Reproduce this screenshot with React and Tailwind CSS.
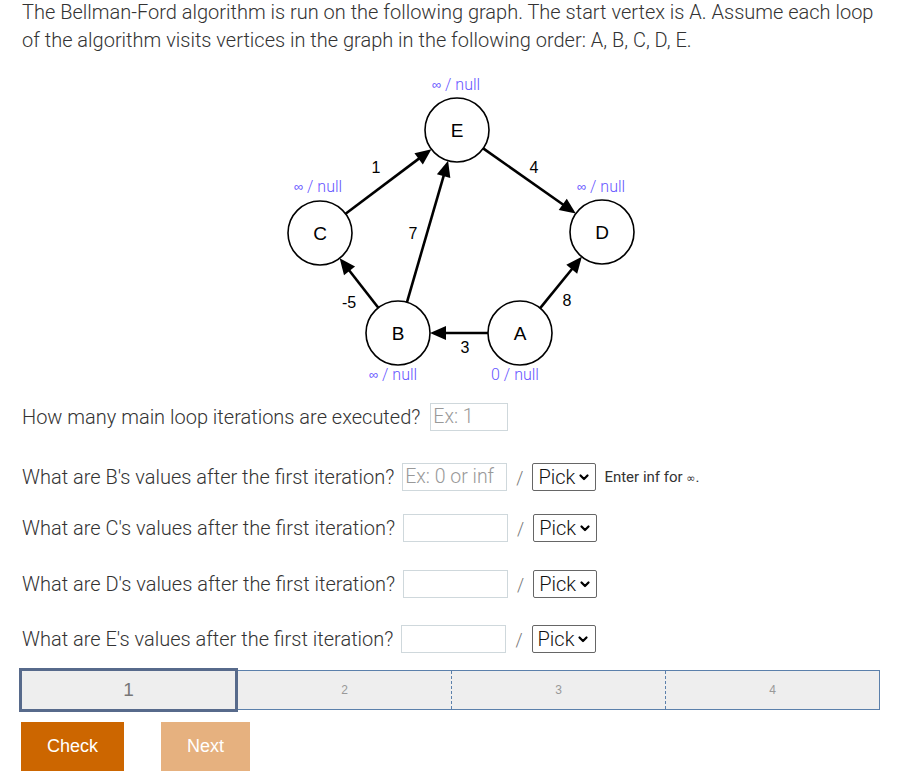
import React from "react";

const R = 32;
const nodes = {
  A: [520, 333],
  B: [398, 333],
  C: [320, 233],
  D: [602, 232],
  E: [457, 130],
};
const edges = [
  ["C", "E"],
  ["B", "E"],
  ["E", "D"],
  ["B", "C"],
  ["A", "B"],
  ["A", "D"],
];
const labels = [
  { n: "E", x: 456, y: 84, v: "" },
  { n: "C", x: 318, y: 186, v: "" },
  { n: "D", x: 601, y: 186, v: "" },
  { n: "B", x: 393, y: 374, v: "" },
  { n: "A", x: 515, y: 374, v: "0" },
];
const weights = [
  { x: 376, y: 167, t: "1" },
  { x: 534, y: 167, t: "4" },
  { x: 413, y: 233, t: "7" },
  { x: 349, y: 302, t: "-5" },
  { x: 567, y: 300, t: "8" },
  { x: 465, y: 347, t: "3" },
];

const Edge = ({ from, to }) => {
  const [x1, y1] = nodes[from];
  const [x2, y2] = nodes[to];
  const d = Math.hypot(x2 - x1, y2 - y1);
  const ux = (x2 - x1) / d;
  const uy = (y2 - y1) / d;
  const sx = x1 + ux * R;
  const sy = y1 + uy * R;
  const tx = x2 - ux * R;
  const ty = y2 - uy * R;
  const len = 16;
  const w = 7;
  const bx = tx - ux * len;
  const by = ty - uy * len;
  const pts = `${tx},${ty} ${bx - uy * w},${by + ux * w} ${bx + uy * w},${by - ux * w}`;
  return (
    <g>
      <line x1={sx} y1={sy} x2={bx + ux * 2} y2={by + uy * 2} stroke="#000" strokeWidth="2.6" />
      <polygon points={pts} fill="#000" />
    </g>
  );
};

const Graph = () => (
  <svg width="863" height="322" viewBox="22 66 863 322" className="block">
    {edges.map(([a, b]) => (
      <Edge key={a + b} from={a} to={b} />
    ))}
    {Object.entries(nodes).map(([k, [x, y]]) => (
      <g key={k}>
        <circle cx={x} cy={y} r={R} fill="#fff" stroke="#000" strokeWidth="1.6" />
        <text x={x} y={y + 7} textAnchor="middle" fontSize="19" fontFamily="'Liberation Sans', Arial, sans-serif" fill="#000">
          {k}
        </text>
      </g>
    ))}
    {weights.map((w) => (
      <text key={w.t} x={w.x} y={w.y + 6} textAnchor="middle" fontSize="16" fontFamily="'Liberation Sans', Arial, sans-serif" fill="#000">
        {w.t}
      </text>
    ))}
    {labels.map((l) => (
      <text key={l.n} x={l.x} y={l.y + 6} textAnchor="middle" fontSize="16" fontFamily="Roboto, sans-serif" fill="#6655ff">
        {l.v ? (
          l.v
        ) : (
          <tspan fontSize="13" fontFamily="'DejaVu Sans', sans-serif" dy="-1">
            ∞
          </tspan>
        )}
        <tspan dy={l.v ? 0 : 1}> / null</tspan>
      </text>
    ))}
  </svg>
);

const Chevron = () => (
  <svg width="12" height="12" viewBox="0 0 24 24" fill="none" stroke="#000" strokeWidth="4.5" strokeLinecap="round" strokeLinejoin="round">
    <path d="M5 9l7 7 7-7" />
  </svg>
);

const Pick = () => (
  <span className="inline-flex items-center gap-[3px] h-[28px] w-[64px] pl-[5px] border border-[#666] rounded-[2px] text-[20px] font-light text-[#111] leading-none">
    Pick <Chevron />
  </span>
);

const Row = ({ letter, placeholder, note, className }) => (
  <div className={"flex items-center h-[28px] " + className}>
    <span>What are {letter}'s values after the first iteration?</span>
    <span className="ml-[8px] w-[105px] h-[28px] border border-[#cfd8dc] flex items-center px-[2px] text-[19.5px] text-[#999]">
      {placeholder}
    </span>
    <span className="mx-[9px] text-[#777] text-[18px]">/</span>
    <Pick />
    {note && (
      <span className="ml-[8px] text-[15px] text-[#333] font-normal">
        Enter inf for <span className="text-[11px] font-['DejaVu_Sans',sans-serif]">∞</span>.
      </span>
    )}
  </div>
);

export default function App() {
  return (
    <div className="w-[907px] h-[771px] overflow-hidden bg-white px-[22px] font-['Roboto',sans-serif] font-light text-[#333] text-[20px]">
      <p className="leading-[28px] -mt-[2px]">
        The Bellman-Ford algorithm is run on the following graph. The start vertex is A. Assume each loop of the algorithm visits vertices in the graph in the following order: A, B, C, D, E.
      </p>
      <div className="mt-[12px]">
        <Graph />
      </div>
      <div className="flex items-center h-[28px] mt-[15px]">
        <span>How many main loop iterations are executed?</span>
        <span className="ml-[10px] w-[78px] h-[28px] border border-[#cfd8dc] flex items-center px-[2px] text-[19.5px] text-[#999]">
          Ex: 1
        </span>
      </div>
      <Row letter="B" placeholder="Ex: 0 or inf" note className="mt-[32px]" />
      <Row letter="C" className="mt-[23px]" />
      <Row letter="D" className="mt-[28px]" />
      <Row letter="E" className="mt-[27px]" />
      <div className="-ml-[3px] mt-[17px] w-[861px] h-[40px] flex border-y border-r border-[#5b80ab] bg-[#eeeeee] font-['Liberation_Sans',Arial,sans-serif] font-normal">
        <div className="w-[219px] h-[44px] -my-[3px] border-[3px] border-[#576a8b] flex items-center justify-center text-[19px] text-[#777]">
          1
        </div>
        <div className="flex-1 flex items-center justify-center text-[12px] text-[#999]">2</div>
        <div className="flex-1 flex items-center justify-center text-[12px] text-[#999] border-l border-dashed border-[#5b80ab]">3</div>
        <div className="flex-1 flex items-center justify-center text-[12px] text-[#999] border-l border-dashed border-[#5b80ab]">4</div>
      </div>
      <div className="flex gap-[37px] mt-[12px] -ml-[1px] font-['Liberation_Sans',Arial,sans-serif] font-normal">
        <button className="w-[103px] h-[49px] bg-[#cc6600] text-white text-[18px]">Check</button>
        <button className="w-[89px] h-[49px] bg-[#e6b17f] text-white text-[18px]">Next</button>
      </div>
    </div>
  );
}
